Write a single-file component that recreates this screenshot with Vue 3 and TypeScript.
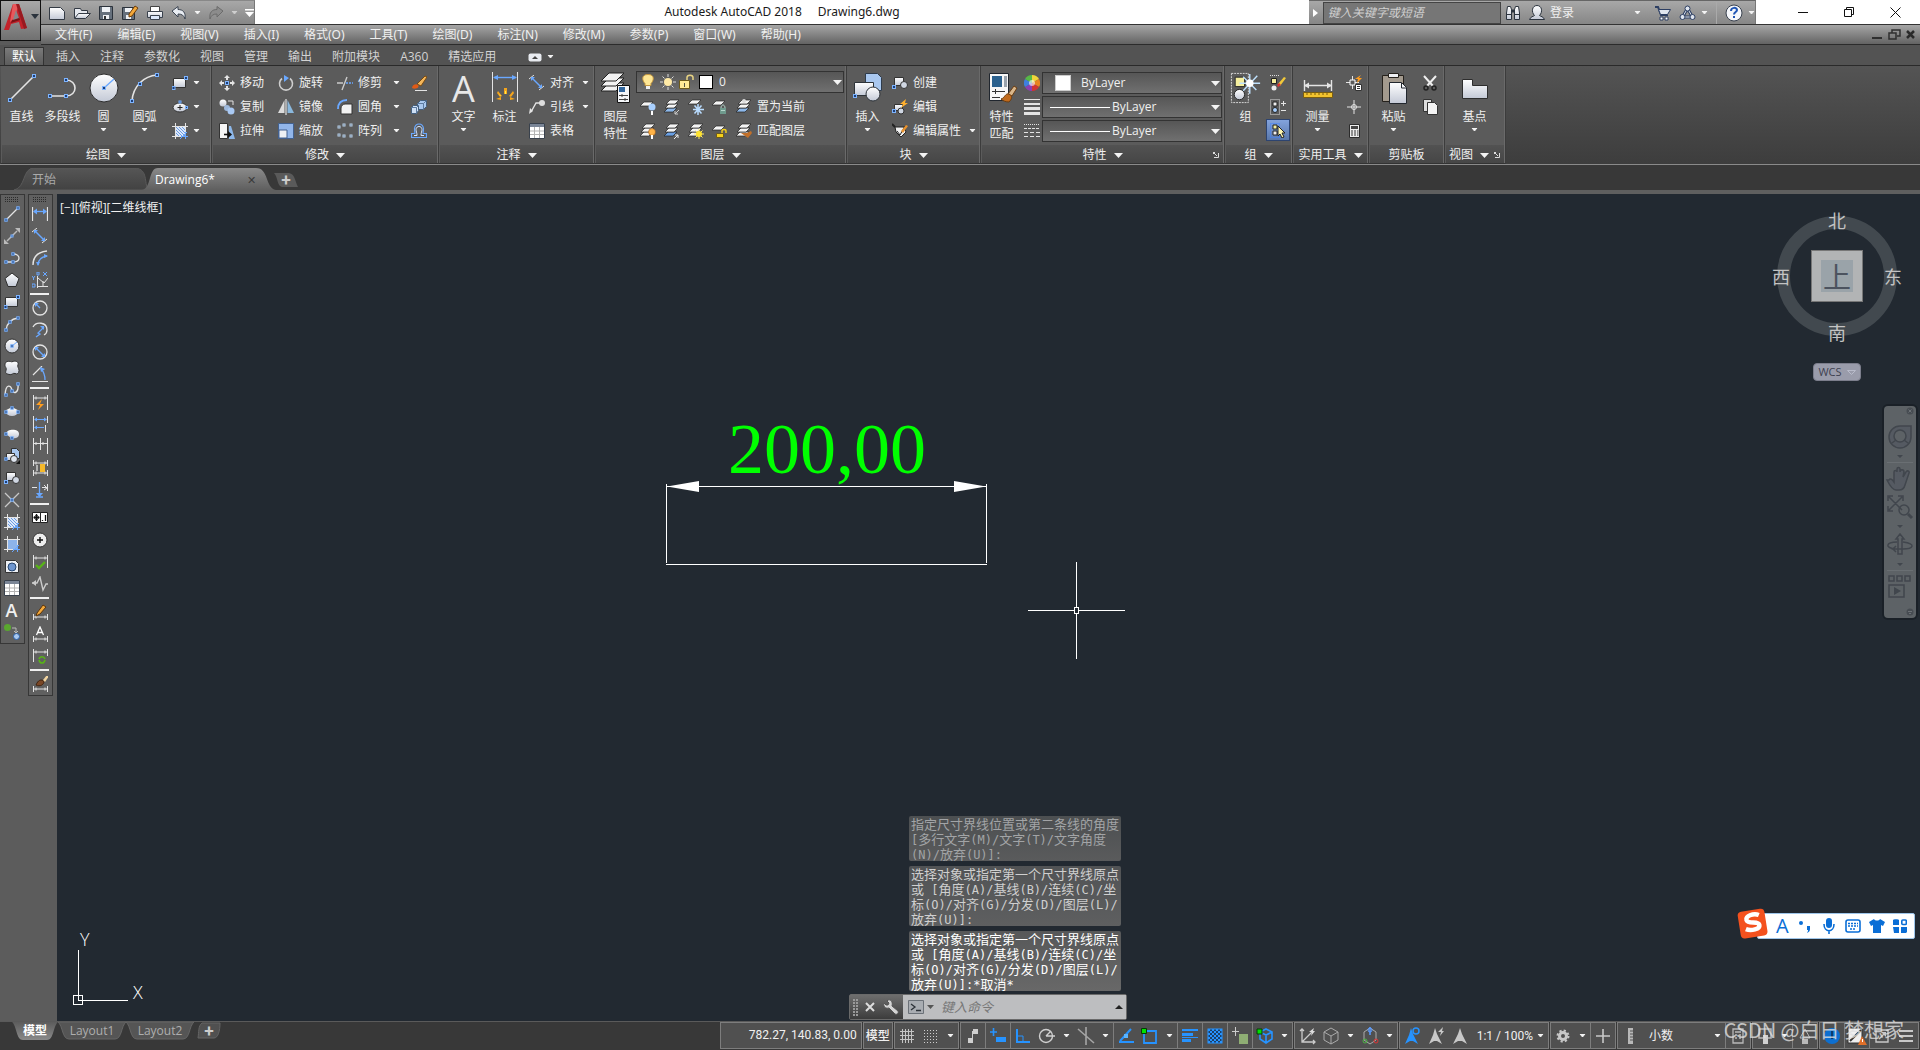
<script setup lang="ts">
import { h } from 'vue'

type Glyph = [number, number, string]
interface Big { n: string; t: string[]; caret?: boolean }
interface Small { n: string; t?: string; caret?: boolean; on?: boolean }
interface Panel { id: string; title: string; caret?: boolean; launch?: boolean; big: Big[]; cols: Small[][] }

const W = '#e4e4e4'
const B = '#6aa8ff'
const hd = (x: number, y: number, s = 3) =>
  `<rect x="${x - s / 2}" y="${y - s / 2}" width="${s}" height="${s}" fill="#1d3f78" stroke="#7db4ff"/>`
const line = (d: string, c = W, w = 1) => `<path d="${d}" stroke="${c}" stroke-width="${w}"/>`
const fill = (d: string, c: string, s = 'none') => `<path d="${d}" fill="${c}" stroke="${s}"/>`
const sheet = (x: number, y: number, c = '#f4f4f4') =>
  `<path d="M${x + 4} ${y}h9l-4 4h-9z" fill="${c}" stroke="#242424" stroke-width=".7"/>`
const stack = (c3 = '#f4f4f4') => sheet(0, 9, c3) + sheet(1, 5) + sheet(2, 1)
const hdim = (y: number) => line(`M1.500 ${y - 3}v6M15.500 ${y - 3}v6M2 ${y}h13M4 ${y - 1.5}v3M13 ${y - 1.5}v3`)
const hatch = (inner: string) =>
  `<rect x="4" y="4" width="9" height="9" fill="${inner}"/>` + line('M0 3.500h16M3.500 0v16M0 13.500h9M13.500 0v9') + line('M9 13.500h7M13.500 9v7M15 9l-7 7', B)

const glyphs: Record<string, Glyph> = {
  caret: [7, 4, fill('M1 0h5l-2.500 3z', '#f4f4f4', '#f4f4f4')],
  caretBig: [9, 5, fill('M0 0h9l-4.500 5z', '#f4f4f4')],
  caretDark: [7, 4, fill('M0 0h7l-3.500 4z', '#555')],
  caretUp: [8, 4, fill('M0 4h8l-4-4z', '#222')],
  caretRight: [5, 8, fill('M0 0v8l5-4z', '#fff')],
  launch: [6, 6, line('M0 .5h2M.5 0v2M1 1l3 3', '#ddd') + line('M5.500 1v4.500h-4.500', '#ddd')],
  appA: [24, 28, fill('M0 27L9 1h6l8 24-6 1-2-7-8 2-2 6z', '#c3222a') + fill('M9 1h6l-5 15-4 3z', '#e8585c') + fill('M8 17l7-3 1 3-9 3z', '#7d1216') + fill('M12 7l3 8-6 2z', '#85878a') + fill('M15 1l8 24-3 1L12 1z', '#981a20')],
  appCaret: [8, 5, fill('M0 0h8l-4 5z', '#2b333d')],
  new: [18, 16, fill('M1.500 2.500h11l4 4v8h-15z', 'url(#gl)', '#333a44')],
  open: [18, 16, fill('M1.500 13V3.500h6l1 2h6v3', '#e6e9ef', '#333a44') + fill('M1.500 13.500l4-5h12l-5 5z', 'url(#gl)', '#333a44')],
  save: [16, 16, fill('M1.500 1.500h13v13h-13z', '#66707c', '#2b323b') + fill('M4 2h8v5H4zM5 10h6v4H5z', '#eef1f5') + fill('M6 11h2v3H6z', '#333')],
  saveAs: [18, 16, fill('M1.500 2.500h12v12h-12z', '#66707c', '#2b323b') + fill('M4 3h7v4H4zM5 10h5v4H5z', '#eef1f5') + fill('M8 9l6-8 3 2-6 8-3 1z', '#f3a83a', '#6b3d0c')],
  print: [18, 16, fill('M4.500 1.500h9v5h-9z', '#fff', '#444') + fill('M1.500 6.500h15v6h-15z', 'url(#gl)', '#39414c') + fill('M4.500 10.500h9v4h-9z', '#dbe7fa', '#39414c')],
  undo: [16, 14, fill('M1 5l6-4.500v3c5 0 8 3 7 9.500-1-3.500-3-5-7-5v3z', '#e9edf3', '#3a4350')],
  redo: [16, 14, fill('M15 5L9 .5v3c-5 0-8 3-7 9.500 1-3.500 3-5 7-5v3z', '#8c8c8c', '#6b6b6b')],
  qatMore: [9, 8, fill('M0 0h9v1.500H0zM0 3h9L4.500 8z', '#fff')],
  binoc: [16, 16, fill('M2.500 1.500h3l1 3v10h-5V8zM13.500 1.500h-3l-1 3v10h5V8z', 'url(#gl)', '#2c343e') + line('M6 6h4', '#2c343e', 3) + line('M1.500 9.500h5M9.500 9.500h5', '#2c343e')],
  user: [16, 16, fill('M.5 14.500c1-3 4-3 5-4C2 7 3 .5 8 .5S14 7 10.500 10.500c1 1 4 1 5 4z', 'url(#gl)', '#2c343e')],
  cart: [17, 16, line('M1 2h3l3 8h7', '#2d3f63', 2) + fill('M4.500 4.500h12l-3 5h-7z', '#dfe5ef', '#2d3f63') + fill('M6 12h3v3H6zM11 12h3v3h-3z', '#fff', '#2d3f63')],
  a360: [17, 16, line('M8.500 3.500L3.500 12h10z', '#2d3f63', 3) + line('M8.500 3.500L3.500 12h10z', '#dfe5ef', 1) + '<g fill="#dfe5ef" stroke="#2d3f63"><circle cx="8.500" cy="3.500" r="2.500"/><circle cx="3.500" cy="12" r="2.500"/><circle cx="13.500" cy="12" r="2.500"/></g>'],
  help: [18, 18, '<circle cx="9" cy="9" r="8" fill="#f5f7fb" stroke="#3b4350"/><path d="M6 7c0-4 6-4 6-1 0 2-3 2-3 4.500M9 12v2" stroke="#1f55b5" stroke-width="2"/>'],
  wMin: [10, 10, line('M0 5.500h10', '#111')],
  wMax: [10, 10, line('M.5 2.500h7v7h-7zM2.500 2V.5h7v7H8', '#111')],
  wClose: [11, 11, line('M.5 .5l10 10M10.500 .5l-10 10', '#111')],
  mMin: [11, 10, line('M0 8h10', '#2f2f2f', 2)],
  mMax: [13, 11, line('M1 4h7v6H1zM4 4V1h8v6H9', '#2f2f2f', 1.5)],
  mClose: [9, 9, line('M1 1l7 7M8 1L1 8', '#2a2a2a', 2.5)],
  ribbonMin: [14, 9, '<rect x=".5" y=".5" width="13" height="8" rx="2" fill="#e8ebf0"/><path d="M4 6h6L7 3z" fill="#444"/>'],

  line: [32, 32, line('M4 28L28 4', W, 1.6) + hd(4, 28) + hd(28, 4)],
  pline: [32, 32, line('M3 24h16c12 0 12-16 0-16', W, 1.6) + hd(3, 24) + hd(19, 24) + hd(19, 8)],
  circle: [32, 32, '<circle cx="16" cy="16" r="14" fill="url(#gl)" stroke="#2d2d2d"/>' + line('M16 16L26 7', B, 1.4) + hd(16, 16)],
  arc: [32, 32, line('M3 29C4 14 15 4 28 3', W, 1.6) + hd(3, 29) + hd(11, 12) + hd(28, 3)],
  rect: [16, 16, fill('M1.500 3.500h12v9h-12z', 'url(#gl)', '#333') + hd(1.5, 13) + hd(14, 3)],
  ellipse: [16, 16, '<ellipse cx="8" cy="8.500" rx="7" ry="4.500" fill="url(#gl)" stroke="#333"/>' + line('M8 6v5M5.500 8.500h5', '#222') + hd(8, 3, 2) + hd(14.5, 8.5, 2)],
  hatch: [16, 16, hatch('url(#hatchFill)')],
  grad: [16, 16, hatch('#8db4ea')],
  move: [16, 16, line('M8 1v4M8 11v4M1 8h4M11 8h4', W, 2) + fill('M8 0l3 3H5zM8 16l3-3H5zM0 8l3-3v6zM16 8l-3-3v6z', W) + hd(8, 8)],
  rotate: [16, 16, line('M4 3.500a6.500 6.500 0 1 0 8 0', '#cfcfcf', 1.6) + fill('M6 0l5 3-5 4z', B)],
  trim: [16, 16, line('M0 8h6M10 2L5 15', '#ccc', 1.4) + line('M9 8h2M12 8h2M15 8h1', B, 1.4)],
  erase: [16, 16, line('M4 15.500h12', W) + fill('M6 9l8-8 2 1-6 9z', '#f3b65a', '#7a4a10') + fill('M1 13c0-3 4-5 6-3s-2 5-6 3z', '#e05a16')],
  copy: [16, 16, '<circle cx="4" cy="4" r="3.500" fill="url(#gl)"/><circle cx="8" cy="9" r="3" fill="#9db8dc"/><circle cx="12" cy="12" r="3.500" fill="#a9c9f3"/>' + line('M9 2h5v4', W)],
  mirror: [16, 16, fill('M6.500 1v13H0z', '#dcdcdc') + fill('M9.500 1v13H16z', '#8ab8dd') + line('M8 0v16', '#fff')],
  fillet: [16, 16, fill('M4 15V9c0-2 2-4 4-4h7v10z', '#f2f2f2', '#333') + line('M1 10C1 4 4 1 10 1', B, 1.8)],
  explode: [16, 16, fill('M6.500 4.500l3-3h6v6l-3 3h-6z', '#a9c9f0', '#44607f') + line('M6.500 4.500h6v6M12.500 4.500l3-3', '#5c7ba0') + fill('M.5 8.500l2-2h5v5l-2 3h-5z', '#cfe0f5', '#44607f') + line('M.5 8.500h5v6M5.500 8.500l2-2', '#5c7ba0')],
  stretch: [16, 16, fill('M.5 .5h8v15h-8z', '#f5f5f5', '#333') + fill('M10 3h2l4 13h-6z', '#8db8ea') + line('M5 11.500h6', '#111', 1.6) + fill('M9 8l4 3.500-4 3.500z', '#111')],
  scale: [16, 16, fill('M.5 .5h15v15h-15z', '#92b6ea', '#42618f') + fill('M1 7h8v8H1z', '#eef1f5', '#42618f')],
  array: [16, 16, [[2, 4], [2, 12], [7, 2], [7, 13], [14, 2], [14, 13]].map(([x, y]) => `<rect x="${x - 1}" y="${y - 1}" width="2" height="2" fill="#345" stroke="#bcd3ec"/>`).join('')],
  offset: [16, 16, line('M.5 14.500h15v-4h-3c-1 0 0-2 0-5-1-6-8-6-9 0 0 3 1 5 0 5h-3z', B, 1.2) + line('M3 12.500h3c0-3-1-4-1-6 0-4 6-4 6 0 0 2-1 3-1 6h3', '#d5e5ff')],
  dimBig: [32, 32, line('M3.500 0v30M28.500 0v30') + line('M5 5.500h22', B, 1.4) + fill('M4 5.500l5-2.500v5zM28 5.500l-5-2.500v5z', B) + fill('M15 16h3v6h-3zM9 19l4 5-2 1-3-4zM24 19l-4 5 2 1 3-4zM7 27l5-2v3zM26 27l-5-2v3z', '#f5a51c') + fill('M16 19h1v3h-1zM10 22l2 2h-1z', '#fff04a')],
  aligned: [16, 16, line('M0 4l5-4M10 15l5-4') + line('M3 3l9 9', B, 1.4) + fill('M2 2h4l-4 4zM13 13H9l4-4z', B)],
  leader: [16, 16, '<circle cx="13" cy="4" r="3" fill="#ddd"/>' + line('M11 4H7l-5 9', W, 1.4) + fill('M0 15l1-6 3 3z', W)],
  table: [16, 16, fill('M.5 .5h15v15h-15z', '#fff', '#39414c') + fill('M1 1h14v3H1z', '#7a8596') + line('M1 8h14M1 11.500h14M5.500 4v11M10.500 4v11', '#b3b3b3')],
  layerProps: [32, 32, [14, 9, 4].map((y) => `<path d="M9 ${y - 3}h15l-8 8H1z" fill="#f2f2f2" stroke="#222"/>`).join('') + fill('M17.500 13.500h12v17h-12z', '#f5f7fa', '#111') + fill('M19 15h6v5h-6z', '#31679f') + line('M19 23.500h9M19 27.500h9M22 22v3M25 26v3', '#444')],
  bulb: [12, 16, fill('M6 .5c7 0 6 6 3 9v2H3v-2C0 6.500-1 .5 6 .5z', '#ffe795', '#c2953e') + fill('M4 12h4v3H4z', '#eee')],
  sun: [16, 16, line('M8 0v3M8 13v3M0 8h3M13 8h3M2.500 2.500l2 2M11.500 11.500l2 2M13.500 2.500l-2 2M2.500 13.500l2-2', '#ddd') + '<circle cx="8" cy="8" r="4" fill="#ffeaa6"/>'],
  lockOpen: [16, 16, line('M8 7V3.500c0-3 6-3 6 0V6', '#e8d383', 1.5) + fill('M.5 6.500h10v8H.5z', '#ffeb96', '#6c5a1b') + line('M5.500 9v4', '#554')],
  l1: [16, 16, sheet(0, 3) + '<circle cx="12" cy="8" r="3.500" fill="#a9d0ff"/>' + line('M12 12v4', '#fff', 2)],
  l2: [16, 16, stack('#8db8ea') + line('M15 11l-4 4m0-3v3h3', '#ccc')],
  l3: [16, 16, sheet(0, 1) + line('M10 5v11M5 10.500h11M6.500 6.500l7 8M13.500 6.500l-7 8', '#b9dcff', 1.5)],
  l4: [16, 16, sheet(0, 2) + fill('M8 9h6v6H8z', '#6f9a8d') + line('M9 9c0-4 4-4 4 0M9 11.500h4', '#b5d6cb')],
  l5: [16, 16, stack('#8db8ea') + '<circle cx="8" cy="2" r="2" fill="#ddd"/>'],
  m1: [16, 16, stack() + '<circle cx="12" cy="9" r="3.500" fill="#ffb347" stroke="#8a4a10" stroke-width=".5"/>' + line('M12 12v4', '#fff', 2)],
  m2: [16, 16, stack('#6aa0e4') + line('M10 16l4-4m-3 0h3v3', '#eee')],
  m3: [16, 16, stack() + line('M11 6v10M6 11h10M7.500 7.500l7 7M14.500 7.500l-7 7', '#ffe96b') + '<circle cx="11" cy="11" r="3" fill="#ffe32e"/>'],
  m4: [16, 16, sheet(0, 3) + fill('M4.500 10.500h7v4h-7z', '#f5cf1b', '#6c5a1b') + line('M10 10V8c0-2 4-2 4 0v2', '#f5cf1b', 1.4)],
  m5: [16, 16, stack() + fill('M5 10l6 0 4-2 1 2-4 5z', '#c2702a')],
  insert: [32, 32, fill('M13.500 1.500h12l4 4v13h-16z', '#a9c8f0', '#2f3c4c') + fill('M2.500 10.500h19v13h-19z', 'url(#gl)', '#2d3339') + '<circle cx="21" cy="22" r="7" fill="url(#gl)" stroke="#2d3339"/>' + hd(3, 24)],
  bCreate: [16, 16, fill('M2.500 2.500h9v8h-9z', 'url(#gl)', '#333') + '<circle cx="12" cy="10" r="3.500" fill="#cfd6e2" stroke="#333"/>' + hd(2, 12)],
  bEdit: [16, 16, fill('M2.500 5.500h8v6h-8z', 'url(#gl)', '#333') + '<circle cx="9" cy="12" r="3" fill="#cfd6e2" stroke="#333"/>' + fill('M14 0L8 5h3l-2 4 7-5h-3z', '#ffb02e') + hd(2, 12)],
  bAttr: [16, 16, line('M0 1l3 3', '#222', 2) + fill('M3 4h9l2 5-5 5-5-5z', '#f0f0f0', '#222') + line('M5 8l3 4 5-9', '#222') + fill('M9 8l5-6 2 1-5 7z', '#e8922e')],
  match: [32, 32, fill('M3.500 1.500h19v27h-19z', '#f7f7f7', '#20262e') + fill('M6 4h10v11H6z', '#2b618e') + fill('M18 4h3v11h-3z', '#9aa3ad') + line('M6 19.500h13M6 25.500h8M9.500 17v5', '#333') + fill('M22 22l6-8 3 2-5 8z', '#d9b78b', '#6a3d12') + fill('M15 27c4-1 4-6 8-5 4 2 3 5 0 8-3 0-6-1-8-3z', '#c06a1c', '#6a3d12')],
  wheel: [16, 16, '<path d="M8 8V0a8 8 0 0 1 7 4z" fill="#f0d43a"/><path d="M8 8l7-4a8 8 0 0 1 0 8z" fill="#e88420"/><path d="M8 8l7 4a8 8 0 0 1-7 4z" fill="#d23333"/><path d="M8 8v8a8 8 0 0 1-7-4z" fill="#8a3fb5"/><path d="M8 8l-7 4a8 8 0 0 1 0-8z" fill="#3f7fe0"/><path d="M8 8L1 4a8 8 0 0 1 7-4z" fill="#57b847"/><circle cx="8" cy="8" r="3" fill="#fff" opacity=".6"/>'],
  lweight: [16, 16, line('M0 .5h16', W) + line('M0 5h16', W, 2) + line('M0 9.500h16', W, 3) + line('M0 14.500h16', W, 3)],
  ltype: [16, 16, `<path d="M0 1.500h16" stroke="${W}" stroke-dasharray="1 1"/><path d="M0 5.500h16" stroke="${W}" stroke-dasharray="3 1"/><path d="M0 9.500h16M0 13.500h16" stroke="${W}" stroke-dasharray="4 2"/>`],
  group: [34, 34, '<rect x="1.500" y="1.500" width="18" height="31" stroke="#ddd" stroke-dasharray="2 1"/>' + fill('M5.500 5.500h10v10h-10z', '#f5ef9e', '#222') + '<circle cx="10" cy="24" r="5.500" fill="url(#gl)" stroke="#222"/>' + line('M21 2v21M10 12h22M14 5l14 14M29 4L14 20', '#bfe2ff', 1.5) + '<circle cx="21" cy="12" r="4" fill="#fff"/>'],
  g1: [16, 16, fill('M1.500 3.500h5v5h-5z', '#f5ef9e', '#222') + '<circle cx="4" cy="13" r="2.500" fill="#eee"/><path d="M0 .5h9" stroke="#ddd" stroke-dasharray="1 1"/>' + fill('M8 9l6-7 2 1-6 8z', '#f0c83a') + fill('M7 10l2-2 2 2-3 2z', '#d33')],
  g2: [16, 16, '<rect x=".5" y=".5" width="9" height="15" stroke="#ddd" stroke-dasharray="1 1"/>' + fill('M3 3h4v4H3z', '#eee', '#222') + '<circle cx="5" cy="11" r="2.500" fill="#a9d0ff" stroke="#222"/>' + line('M11 4.500h5M13.500 2v5M11 11.500h5')],
  g3: [16, 16, '<rect x=".5" y="1.500" width="9" height="14" stroke="#3f82ff" stroke-dasharray="1 1"/>' + fill('M3 3h4v4H3z', '#f5ef9e', '#222') + fill('M3 9h4v4H3z', '#eee', '#222') + fill('M8 4l7 7h-3l2 4-2 1-2-4-2 2z', '#fff7b0', '#222')],
  measure: [32, 32, line('M2.500 8v11M29.500 8v11M3 13.500h26', W, 1.4) + fill('M2 13.500l5-3v6zM30 13.500l-5-3v6z', W) + fill('M1.500 20.500h29v5h-29z', '#f2c32e', '#7a5d10') + line('M5 21v2M9 21v2M13 21v2M17 21v2M21 21v2M25 21v2', '#7a5d10')],
  u1: [16, 16, line('M0 7.500h13M6.500 1v13', W) + fill('M4 5h5v5H4z', '#5b5b5b', '#fff') + fill('M15 0l-6 4h3l-1 4 5-5h-3z', '#ff9d1e') + fill('M9.500 9.500h6v6h-6z', '#fff', '#333') + line('M11 11.500h3M11 13.500h3', '#333')],
  u2: [16, 16, line('M8 1v14M1 8h14') + '<circle cx="8" cy="8" r="2.500" stroke="#e4e4e4"/>'],
  calc: [16, 16, fill('M3.500 1.500h10v13h-10z', '#ececec', '#2b2b2b') + fill('M5 3h7v3H5z', '#444') + [8, 10, 12].map((y) => line(`M5 ${y}h2M8 ${y}h2M11 ${y}h1.500`, '#333')).join('')],
  paste: [32, 32, fill('M4.500 3.500h21v26h-21z', '#a39a8e', '#25211c') + fill('M10.500 1.500h10v4h-10z', '#eef0f3', '#25211c') + fill('M11.500 10.500h12l5 5v16h-17z', 'url(#gl)', '#22272e') + line('M23.500 11v5h5', '#22272e')],
  cut: [16, 16, line('M2 1l9 10M14 1L5 11', '#f0f0f0', 2) + '<circle cx="4" cy="13" r="2" stroke="#222" stroke-width="1.500"/><circle cx="12" cy="13" r="2" stroke="#222" stroke-width="1.500"/>'],
  pages: [16, 16, fill('M1.500 .5h8v12h-8z', '#ddd', '#333') + fill('M5.500 3.500h7l3 3v9h-10z', '#f4f4f4', '#333')],
  base: [32, 32, fill('M3.500 7.500h10v6h15v13h-25z', 'url(#gl)', '#2d2d2d')],

  tXline: [16, 16, line('M3 13L13 3', '#bbb', 1.4) + fill('M16 0v5l-5-5zM0 16v-5l5 5z', '#bbb') + hd(8, 8, 2)],
  tPoly: [16, 16, fill('M8 1l7 5.500-3 8H4L1 6.500z', 'url(#gl)', '#2d2d2d')],
  tLine: [16, 16, line('M2 14L14 2', W, 1.3) + hd(2, 14, 2.4) + hd(14, 2, 2.4)],
  tPline: [16, 16, line('M1 12h8c8 0 8-8 0-8', W, 1.3) + hd(2, 12, 2.4) + hd(9, 12, 2.4) + hd(9, 4, 2.4)],
  tArc: [16, 16, line('M2 14C3 7 7 3 14 2', W, 1.3) + hd(2, 14, 2.4) + hd(6, 6, 2.4) + hd(14, 2, 2.4)],
  tCircle: [16, 16, '<circle cx="8" cy="8" r="7" fill="url(#gl)" stroke="#333"/>' + line('M8 8l5-4', B) + hd(8, 8, 2.4)],
  tCloud: [16, 16, fill('M3 1.500c3-1 4 1 6 0s6 0 5 3 1 3 1 6-2 4-4 3-3 2-6 1-4-1-3-4-1-3-1-5 0-3 2-4z', 'url(#gl)', '#333')],
  tSpline: [16, 16, line('M1 13C2 0 7 4 8 8s7 4 6-6', W, 1.4) + hd(2, 13, 2.4) + hd(8, 9, 2.4) + hd(14, 2, 2.4)],
  tEll: [16, 16, '<ellipse cx="8" cy="8" rx="6" ry="4" fill="url(#gl)"/>' + hd(2, 8, 2.4) + hd(14, 8, 2.4) + hd(8, 4, 2.4)],
  tEllArc: [16, 16, '<path d="M2 8c0-5 13-6 13 0 0 4-4 5-8 4z" fill="url(#gl)"/>' + hd(2, 8, 2.4) + hd(8, 12, 2.4)],
  tInsert: [16, 16, fill('M7.500 .5h5l3 3v7h-8z', '#a9c8f0', '#333') + fill('M2.500 5.500h8v7h-8z', 'url(#gl)', '#333') + '<circle cx="10" cy="11" r="3.500" fill="#dfe5ef" stroke="#333"/>' + fill('M16 12v4h-4z', '#111') + hd(2, 11, 2.4)],
  tPoint: [16, 16, line('M1 1l14 14M15 1L1 15', '#c8c8c8', 1.3) + hd(8, 8, 2.4)],
  tRegion: [16, 16, fill('M1.500 2.500h10l3 3v9h-13z', '#edf0f4', '#333') + '<circle cx="8" cy="9" r="4" fill="#6e96d0" stroke="#26466f"/>'],
  tAdd: [16, 16, '<circle cx="3.500" cy="3.500" r="3.500" fill="#5aa82f"/><circle cx="12.500" cy="12.500" r="3" fill="#a9c8f0" stroke="#2a5ea8"/>' + line('M8 4h4v4M10 7l2 2 2-2', '#bbb')],
  dLin: [16, 16, line('M.5 1v14M15.500 1v14', W, 1.2) + line('M2 5.500h12', B, 1.3) + fill('M1 5.500l4-3v6zM15 5.500l-4-3v6z', B)],
  dArc: [16, 16, line('M1 15C1 7 6 2 15 1', W, 1.4) + line('M6 15c0-5 3-8 9-9', B, 1.4) + fill('M16 6l-4-2v4zM6 16l-2-4h4z', B)],
  dOrd: [16, 16, line('M5.500 4v12M5 14.500h11M6 6l6 5 4-5M11 14v-5', W) + line('M0 4l1.500 2L3 4M1.500 6v2M11 0l4 4M15 0l-4 4M0 12h3v3H0zM5 0h2v3H5z', B)],
  dRad: [16, 16, '<circle cx="8" cy="8" r="7" stroke="#e4e4e4" stroke-width="1.300"/>' + line('M3 3l5 5', B, 1.3) + fill('M3 3h4L3 7z', B)],
  dJog: [16, 16, line('M1 5c3-6 14-5 14 3 0 3-1 4-3 5', W, 1.3) + line('M4 15l4-3-2-1 6-6', B, 1.3) + fill('M12 4v4L8 4z', B)],
  dDia: [16, 16, '<circle cx="8" cy="8" r="7" stroke="#e4e4e4" stroke-width="1.300"/>' + line('M4 4l8 8', B, 1.3) + fill('M3 3h4L3 7zM13 13H9l4-4z', B)],
  dAng: [16, 16, line('M0 15.500h16M1 9l9-9', W, 1.2) + line('M9 3c3 3 4 6 4 11', B, 1.3) + fill('M8 1l5 2-4 3z', B)],
  dQuick: [16, 16, hdim(4) + line('M1.500 4v12M15.500 4v12') + fill('M10 5l-6 6h4l-2 5 6-6H8z', '#ff9d1e')],
  dBase: [16, 16, line('M1.500 0v16M15.500 0v7M13.500 9v7') + line('M3 3.500h11M3 11.500h9', B, 1.2) + fill('M2 3.500l3-2v4zM2 11.500l3-2v4zM15 3.500l-3-2v4z', B)],
  dCont: [16, 16, line('M1.500 0v16M8.500 0v12M15.500 0v16M2 5.500h13M4 4v3M11 4v3')],
  dSpace: [16, 16, hdim(3) + hdim(13) + fill('M8 4h5v8H8z', '#f5b92b') + line('M5 5v6', '#fff')],
  dBreak: [16, 16, line('M0 5.500h5M10 5.500h5M12 3l3 3-3 2M15.500 2v7') + line('M7.500 0v14M4 15h7', B, 1.3) + fill('M4 11h7l-3.500 4z', B)],
  dTol: [16, 16, fill('M.5 2.500h8v10h-8zM8.500 2.500h7v10h-7z', '#fff', '#222') + line('M4.500 4v7M1.500 7.500h6M13.500 5v6M10.500 10v1', '#111', 1.3) + '<circle cx="4.500" cy="7.500" r="2" stroke="#111"/>'],
  dCen: [16, 16, '<circle cx="8" cy="8" r="7" fill="#eee" stroke="#333"/>' + line('M8 5v6M5 8h6', '#111', 1.4)],
  dInsp: [16, 16, hdim(4) + line('M1.500 4v10M15.500 4v10') + line('M4 11l3 3 6-6', '#58b318', 2.4)],
  dJogL: [16, 16, line('M0 7h5l3-6 3 13 3-6h2', '#ccc', 1.4) + fill('M0 7l4-3v6z', '#ccc')],
  dEdit: [16, 16, hdim(13) + fill('M5 9l6-8 3 2-6 7-4 2z', '#f3a83a', '#5c340a')],
  dText: [16, 16, hdim(13) + line('M4.500 9L8 1l3.500 8M6 6.500h4', '#fff', 1.3)],
  dUpd: [16, 16, hdim(4) + line('M1.500 4v10M15.500 4v4') + line('M7 11c1-3 5-3 6 0M13 12c-1 4-5 4-6 0', '#58b318', 1.6)],
  dStyle: [16, 16, hdim(13) + fill('M4 9c2-5 5-6 8-4 0 4-4 6-8 4z', '#7a4726', '#40220d') + fill('M11 4l4-5 2 1-4 6z', '#f0d4a0')],

  sGrid: [18, 18, line('M4.500 2v14M7.500 2v14M10.500 2v14M13.500 2v14M2 4.500h14M2 8.500h14M2 12.500h14', '#c4c4c4')],
  sSnap: [18, 18, [3, 6, 9, 12, 15].map((y) => `<path d="M2 ${y + .5}h14" stroke="#cfcfcf" stroke-dasharray="1 2"/>`).join('')],
  sInfer: [18, 18, fill('M4 11h5v5H4zM9 2h5v5H9z', '#cfcfcf') + line('M8.500 4v8', '#cfcfcf')],
  sDyn: [18, 18, line('M4.500 1v8M1 5h7', '#2693ff', 1.6) + fill('M7 10h10v5H7z', '#2693ff')],
  sOrtho: [18, 18, line('M3 2v13h13', '#2693ff', 2) + line('M4 9h5v5', '#2693ff')],
  sPolar: [18, 18, '<circle cx="8" cy="9" r="6.500" stroke="#cfcfcf" stroke-width="1.400"/>' + line('M8 9h9M8 9l5-5', '#cfcfcf', 1.4)],
  sIso: [18, 18, line('M1 2l16 14M9 0v18', '#a5a5a5', 1.6)],
  sTrack: [18, 18, line('M2 15h15M3 14L14 2', '#2693ff', 2) + fill('M7 7h4v4H7z', '#5ab4ff')],
  sOsnap: [18, 18, line('M3 4h12v12H3z', '#2693ff', 1.8) + fill('M.5 1.500h5v5h-5z', '#00e000', '#043a04')],
  sLw: [18, 18, fill('M1 2h16v2H1zM1 6h11v3H1zM1 10h16v1H1zM1 12h9v3H1z', '#2693ff')],
  sTrans: [18, 18, '<rect x="2" y="2" width="14" height="14" fill="url(#chk)" stroke="#2693ff"/>'],
  sCycle: [18, 18, line('M4.500 0v9M1 4.500h7', '#ccc') + fill('M8 7h9v10H8z', '#8fae74')],
  s3d: [18, 18, line('M10 2l6 3v7l-6 4-6-4V5zM4 5l6 3 6-3M10 8v8', '#2693ff', 1.6) + fill('M1 2h5v5H1z', '#00e000', '#043a04')],
  sUcs: [18, 18, line('M4 2v13h13M2 4l2-2 2 2M4 15L14 5M15 13l2 2-2 2', '#ccc', 1.3) + fill('M16 1l-5 4h3l-1 4 4-5h-2z', '#ddd')],
  sCube: [18, 18, line('M9 1l7 4v8l-7 4-7-4V5zM2 5l7 4 7-4M9 9v8', '#aaa')],
  sGizmo: [18, 18, line('M9 1l6 4v8l-6 4-6-4V5z', '#aaa') + line('M9 0v8', '#5a9bff', 1.5) + '<circle cx="4" cy="14" r="2" stroke="#4bb543"/><circle cx="15" cy="14" r="2" stroke="#d33"/><circle cx="9" cy="3" r="2" stroke="#5a9bff"/>'],
  sAnn1: [18, 18, fill('M8 1l2 6 5 10-5-3H7l-5 3 4-9z', '#2693ff') + '<circle cx="13" cy="4" r="3" stroke="#2693ff" stroke-width="1.500"/>'],
  sAnn2: [18, 18, fill('M8 1l2 6 5 10-5-3H7l-5 3 4-9zM16 0l-5 5h3l-1 4 4-5h-2z', '#c8c8c8')],
  sAnn3: [18, 18, fill('M9 1l2 6 5 10-5-3H7l-5 3 5-10z', '#c8c8c8')],
  sGear: [18, 18, '<circle cx="9" cy="9" r="3.500" stroke="#c8c8c8" stroke-width="3"/><circle cx="9" cy="9" r="5.500" stroke="#c8c8c8" stroke-width="2" stroke-dasharray="2.200 2.120"/>'],
  sPlus: [18, 18, line('M9 2v14M2 9h14', '#c8c8c8', 1.6)],
  sRuler: [18, 18, fill('M7 1h5v16H7z', '#b8b8b8') + line('M9 4h3M9 7h3M9 10h3M9 13h3', '#555')],
  sProps: [18, 18, line('M4 2h10v14H4zM6 5h6M6 8h2M10 8h2M6 11h2M10 11h2', '#b8b8b8', 1.3)],
  sLock: [18, 18, line('M3 2h12v9H3z', '#b8b8b8', 1.5) + fill('M7 8h5v9H7z', '#d0d0d0')],
  sIsol: [18, 18, line('M9 2l5 9H4z', '#b8b8b8') + fill('M6 12h6v5H6z', '#b8b8b8')],
  sHw: [18, 18, '<circle cx="9" cy="9" r="8" fill="#0d6fd0"/>' + line('M9 4v8', '#0a3b70', 2)],
  sImg: [20, 18, fill('M1 1h14v15H1z', '#f0f0f0', '#333') + line('M3 14L14 3', '#333', 2) + fill('M15 9l5 9H11z', '#e0702a') + line('M15.500 12v3', '#fff')],
  sFull: [18, 18, line('M3 3h12v12H3zM6 12l6-6', '#c8c8c8', 1.4) + fill('M13 5v5l-5-5z', '#c8c8c8')],
  sMenu: [18, 18, line('M2 4h14M2 9h14M2 14h14', '#c8c8c8', 2)],
  cmdX: [10, 10, line('M1 1l8 8M9 1L1 9', '#ddd', 2)],
  wrench: [16, 16, fill('M5 1l-1 1 2 2-1 2-2 0-2-2c-1 3 1 6 5 5l6 6c2 1 4-1 3-3l-6-5C10 3 8 0 5 1z', '#d4d4d4', '#555')],
  grip: [6, 18, [1, 4, 7, 10, 13, 16].map((y) => fill(`M0 ${y}h2v2H0zM3 ${y}h2v2H3z`, '#9a9a9a')).join('')],
  gripH: [14, 5, [0, 2, 4].map((y) => `<path d="M0 ${y + .5}h14" stroke="#2c2c2c" stroke-dasharray="1 1"/>`).join('')],
  prompt: [16, 14, fill('M.5 .5h15v13H.5z', '#a9adb2', '#6b7178') + line('M3 4l4 3-4 3M8 10.500h5', '#2c3238', 1.3)],
  sogou: [34, 32, '<g transform="rotate(-9 17 16)"><rect x="3" y="3" width="27" height="27" rx="4" fill="#f4511e"/><path d="M24 9c-5-3-14-1-13 3 1 5 12 2 12 7 0 4-9 5-14 2" stroke="#fff" stroke-width="4.500"/></g>'],
  imePunc: [16, 16, '<circle cx="4" cy="5" r="2" fill="#0a6ed6"/>' + fill('M10 8h3v3c0 2-1 3-3 4 1-2 1-2 1-3h-1z', '#0a6ed6')],
  imeMic: [16, 18, '<rect x="5" y="1" width="6" height="10" rx="3" fill="#0a6ed6"/>' + line('M3 7c0 9 10 9 10 0M8 14v3', '#0a6ed6', 1.6)],
  imeKey: [16, 14, '<rect x="1" y="1" width="14" height="12" rx="2" stroke="#0a6ed6" stroke-width="1.600"/><path d="M3 4.500h10M3 7h10M5 10h6" stroke="#0a6ed6" stroke-width="1.300" stroke-dasharray="2 1"/>'],
  imeShirt: [16, 14, fill('M5 0c1 2 5 2 6 0l5 3-2 4-2-1v8H4V6L2 7 0 3z', '#0a6ed6')],
  imeGrid: [14, 14, fill('M0 1c0-1 6-1 6 0v5H0zM0 8h6v6H1zM8 8h6v5l-1 1H8z', '#0a6ed6') + '<rect x="8.800" y="1" width="4.500" height="4.500" rx="1" stroke="#0a6ed6" stroke-width="1.600"/>'],
}

const Icon = (p: { n: string }) => {
  const [w, ht, body] = glyphs[p.n]
  return h('svg', { width: w, height: ht, viewBox: `0 0 ${w} ${ht}`, fill: 'none', 'aria-hidden': 'true', innerHTML: body })
}

const qat = ['new', 'open', 'save', 'saveAs', 'print', 'undo']
const menus = ['文件(F)', '编辑(E)', '视图(V)', '插入(I)', '格式(O)', '工具(T)', '绘图(D)', '标注(N)', '修改(M)', '参数(P)', '窗口(W)', '帮助(H)']
const tabs = ['默认', '插入', '注释', '参数化', '视图', '管理', '输出', '附加模块', 'A360', '精选应用']

const panels: Panel[] = [
  { id: 'draw', title: '绘图', caret: true,
    big: [{ n: 'line', t: ['直线'] }, { n: 'pline', t: ['多段线'] }, { n: 'circle', t: ['圆'], caret: true }, { n: 'arc', t: ['圆弧'], caret: true }],
    cols: [[{ n: 'rect', caret: true }, { n: 'ellipse', caret: true }, { n: 'hatch', caret: true }]] },
  { id: 'modify', title: '修改', caret: true, big: [],
    cols: [
      [{ n: 'move', t: '移动' }, { n: 'copy', t: '复制' }, { n: 'stretch', t: '拉伸' }],
      [{ n: 'rotate', t: '旋转' }, { n: 'mirror', t: '镜像' }, { n: 'scale', t: '缩放' }],
      [{ n: 'trim', t: '修剪', caret: true }, { n: 'fillet', t: '圆角', caret: true }, { n: 'array', t: '阵列', caret: true }],
      [{ n: 'erase' }, { n: 'explode' }, { n: 'offset' }],
    ] },
  { id: 'annotate', title: '注释', caret: true,
    big: [{ n: 'text', t: ['文字'], caret: true }, { n: 'dimBig', t: ['标注'] }],
    cols: [[{ n: 'aligned', t: '对齐', caret: true }, { n: 'leader', t: '引线', caret: true }, { n: 'table', t: '表格' }]] },
  { id: 'layers', title: '图层', caret: true, big: [{ n: 'layerProps', t: ['图层', '特性'] }], cols: [] },
  { id: 'block', title: '块', caret: true, big: [{ n: 'insert', t: ['插入'], caret: true }],
    cols: [[{ n: 'bCreate', t: '创建' }, { n: 'bEdit', t: '编辑' }, { n: 'bAttr', t: '编辑属性', caret: true }]] },
  { id: 'props', title: '特性', caret: true, launch: true, big: [{ n: 'match', t: ['特性', '匹配'] }], cols: [] },
  { id: 'group', title: '组', caret: true, big: [{ n: 'group', t: ['组'] }], cols: [[{ n: 'g1' }, { n: 'g2' }, { n: 'g3', on: true }]] },
  { id: 'util', title: '实用工具', caret: true, big: [{ n: 'measure', t: ['测量'], caret: true }], cols: [[{ n: 'u1' }, { n: 'u2' }, { n: 'calc' }]] },
  { id: 'clip', title: '剪贴板', big: [{ n: 'paste', t: ['粘贴'], caret: true }], cols: [[{ n: 'cut' }, { n: 'pages' }]] },
  { id: 'view', title: '视图', caret: true, launch: true, big: [{ n: 'base', t: ['基点'], caret: true }], cols: [] },
]
const layerRows: Small[][] = [
  [{ n: 'l1' }, { n: 'l2' }, { n: 'l3' }, { n: 'l4' }, { n: 'l5', t: '置为当前' }],
  [{ n: 'm1' }, { n: 'm2' }, { n: 'm3' }, { n: 'm4' }, { n: 'm5', t: '匹配图层' }],
]
const propRows = [
  { icon: 'wheel', label: '对象颜色', kind: 'swatch' },
  { icon: 'lweight', label: '线宽', kind: 'rule' },
  { icon: 'ltype', label: '线型', kind: 'rule' },
]

const drawTools = ['tLine', 'tXline', 'tPline', 'tPoly', 'rect', 'tArc', 'tCircle', 'tCloud', 'tSpline', 'tEll', 'tEllArc', 'tInsert', 'bCreate', 'tPoint', 'hatch', 'grad', 'tRegion', 'table', 'text', 'tAdd']
const dimTools = ['dLin', 'aligned', 'dArc', 'dOrd', '|', 'dRad', 'dJog', 'dDia', 'dAng', '|', 'dQuick', 'dBase', 'dCont', 'dSpace', 'dBreak', '|', 'dTol', 'dCen', 'dInsp', 'dJogL', '|', 'dEdit', 'dText', 'dUpd', '|', 'dStyle']

const history = [
  ['指定尺寸界线位置或第二条线的角度', '[多行文字(M)/文字(T)/文字角度', '(N)/放弃(U)]:'],
  ['选择对象或指定第一个尺寸界线原点', '或 [角度(A)/基线(B)/连续(C)/坐', '标(O)/对齐(G)/分发(D)/图层(L)/', '放弃(U)]:'],
  ['选择对象或指定第一个尺寸界线原点', '或 [角度(A)/基线(B)/连续(C)/坐', '标(O)/对齐(G)/分发(D)/图层(L)/', '放弃(U)]:*取消*'],
].map((b) => b.map((l) => l.split(/([\x20-\x7e]+)/).filter((s) => s)))
const isLatin = (s: string) => /^[\x20-\x7e]/.test(s)

// Each group holds cells; 'v' is a drop-down arrow, a leading quote marks a caption
const status: string[][][] = [
  [['sGrid', 'sSnap', 'v']],
  [['sInfer'], ['sDyn'], ['sOrtho', 'sPolar', 'v', 'sIso', 'v'], ['sTrack', 'sOsnap', 'v'], ['sLw'], ['sTrans'], ['sCycle'], ['s3d', 'v']],
  [['sUcs', 'sCube', 'v', 'sGizmo', 'v']],
  [['sAnn1', 'sAnn2', 'sAnn3', '"1:1 / 100%', 'v']],
  [['sGear', 'v'], ['sPlus']],
  [['sRuler', '"小数', 'v'], ['sProps']],
  [['sLock', 'v'], ['sIsol']],
  [['sHw'], ['sImg'], ['sFull', 'sMenu']],
]
</script>

<template>
  <div class="app">
    <svg class="defs" width="0" height="0" aria-hidden="true">
      <defs>
        <linearGradient id="gl" x1="0" y1="0" x2="0" y2="1"><stop offset="0" stop-color="#ffffff" /><stop offset="1" stop-color="#c3c9d6" /></linearGradient>
        <linearGradient id="gt" x1="0" y1="0" x2="0" y2="1"><stop offset="0" stop-color="#8a8a8a" /><stop offset="1" stop-color="#5f5f5f" /></linearGradient>
        <linearGradient id="gd" x1="0" y1="0" x2="0" y2="1"><stop offset="0" stop-color="#565656" /><stop offset="1" stop-color="#424242" /></linearGradient>
        <linearGradient id="gb" x1="0" y1="0" x2="0" y2="1"><stop offset="0" stop-color="#5c5c5c" /><stop offset="1" stop-color="#8a8a8a" /></linearGradient>
        <pattern id="hatchFill" width="3" height="3" patternUnits="userSpaceOnUse"><rect width="3" height="3" fill="#dbe8fb" /><path d="M0 0l3 3" stroke="#6c9be0" /></pattern>
        <pattern id="chk" width="4" height="4" patternUnits="userSpaceOnUse"><rect width="4" height="4" fill="#1c3f66" /><path d="M0 0h2v2H0zM2 2h2v2H2z" fill="#2693ff" /></pattern>
      </defs>
    </svg>

    <header class="head">
      <button class="app-btn" aria-label="应用程序菜单"><Icon n="appA" /><Icon n="appCaret" /></button>
      <div class="title-row">
        <div class="qat">
          <button v-for="q in qat" :key="q" :aria-label="q"><Icon :n="q" /></button>
          <Icon n="caret" />
          <button aria-label="redo"><Icon n="redo" /></button>
          <Icon n="caret" class="dim" />
          <Icon n="qatMore" />
        </div>
        <h1 class="title"><span>Autodesk AutoCAD 2018</span><span>Drawing6.dwg</span></h1>
        <div class="info">
          <button class="info-fold" aria-label="折叠"><Icon n="caretRight" /></button>
          <input class="search" type="text" placeholder="键入关键字或短语" aria-label="搜索" />
          <button aria-label="搜索"><Icon n="binoc" /></button>
          <button class="login"><Icon n="user" />登录</button>
          <Icon n="caret" />
          <button class="cart" aria-label="应用商店"><Icon n="cart" /></button>
          <button aria-label="A360"><Icon n="a360" /></button>
          <Icon n="caret" />
          <span class="info-sep"></span>
          <button class="help" aria-label="帮助"><Icon n="help" /></button>
          <Icon n="caret" />
        </div>
        <div class="win">
          <button aria-label="最小化"><Icon n="wMin" /></button>
          <button aria-label="还原"><Icon n="wMax" /></button>
          <button aria-label="关闭"><Icon n="wClose" /></button>
        </div>
      </div>
      <nav class="menu-row">
        <a v-for="m in menus" :key="m" href="#">{{ m }}</a>
        <div class="child-win">
          <button aria-label="最小化图形"><Icon n="mMin" /></button>
          <button aria-label="还原图形"><Icon n="mMax" /></button>
          <button aria-label="关闭图形"><Icon n="mClose" /></button>
        </div>
      </nav>
    </header>

    <nav class="tabs">
      <button v-for="(t, i) in tabs" :key="t" :class="{ active: i === 0 }">{{ t }}</button>
      <button class="fold" aria-label="最小化功能区"><Icon n="ribbonMin" /><Icon n="caret" /></button>
    </nav>

    <div class="ribbon">
      <section v-for="p in panels" :key="p.id" class="panel" :class="'p-' + p.id">
        <div class="body">
          <button v-for="b in p.big" :key="b.n" class="big">
            <span v-if="b.n === 'text'" class="big-a">A</span>
            <Icon v-else :n="b.n" />
            <span v-for="t in b.t" :key="t" class="cap">{{ t }}</span>
            <Icon v-if="b.caret" n="caret" class="drop" />
          </button>
          <div v-for="(c, ci) in p.cols" :key="ci" class="col">
            <button v-for="s in c" :key="s.n" class="small" :class="{ on: s.on }" :aria-label="s.t ?? s.n">
              <Icon :n="s.n" /><span v-if="s.t">{{ s.t }}</span><Icon v-if="s.caret" n="caret" class="more" />
            </button>
          </div>
          <div v-if="p.id === 'layers'" class="col grow">
            <label class="combo">
              <Icon n="bulb" /><Icon n="sun" /><Icon n="lockOpen" class="lock" /><i class="swatch layer"></i>
              <select aria-label="图层"><option>0</option></select><Icon n="caretBig" />
            </label>
            <div v-for="(r, ri) in layerRows" :key="ri" class="layer-row">
              <button v-for="s in r" :key="s.n" class="small" :aria-label="s.t ?? s.n"><Icon :n="s.n" /><span v-if="s.t">{{ s.t }}</span></button>
            </div>
          </div>
          <div v-if="p.id === 'props'" class="col grow">
            <div v-for="r in propRows" :key="r.icon" class="prop-row">
              <Icon :n="r.icon" />
              <label class="combo">
                <i :class="r.kind"></i>
                <select :aria-label="r.label"><option>ByLayer</option></select><Icon n="caretBig" />
              </label>
            </div>
          </div>
        </div>
        <h2 class="panel-title">{{ p.title }}<Icon v-if="p.caret" n="caretBig" /><Icon v-if="p.launch" n="launch" class="launch" /></h2>
      </section>
    </div>

    <nav class="files">
      <button class="file">
        <svg class="shape" viewBox="0 0 134 22" preserveAspectRatio="none" aria-hidden="true"><path d="M0 22C12 20 8 0 20 0H122C134 2 130 14 134 22Z" fill="url(#gd)" stroke="#5a5a5a" /></svg>
        <span>开始</span>
      </button>
      <button class="file current">
        <svg class="shape" viewBox="0 0 134 22" preserveAspectRatio="none" aria-hidden="true"><path d="M0 22C10 20 6 0 16 0H114C127 0 123 20 134 22Z" fill="url(#gt)" /></svg>
        <span>Drawing6*</span><span class="x">✕</span>
      </button>
      <button class="file add" aria-label="新图形">
        <svg class="shape" viewBox="0 0 24 14" preserveAspectRatio="none" aria-hidden="true"><path d="M0 0h15c6 1 6 8 9 14H8C3 13 4 4 0 0z" fill="#5a5a5a" /></svg>
        <span>✚</span>
      </button>
    </nav>

    <main class="work">
      <aside class="dock">
        <div class="bar">
          <Icon n="gripH" class="bar-grip" />
          <button v-for="t in drawTools" :key="t" :aria-label="t"><span v-if="t === 'text'" class="tool-a">A</span><Icon v-else :n="t" /></button>
        </div>
        <div class="bar">
          <Icon n="gripH" class="bar-grip" />
          <template v-for="(t, i) in dimTools" :key="i">
            <hr v-if="t === '|'" />
            <button v-else :aria-label="t"><Icon :n="t" /></button>
          </template>
        </div>
      </aside>

      <div class="canvas">
        <span class="view-label">[−][俯视][二维线框]</span>
        <svg class="drawing" width="600" height="280" viewBox="0 0 600 280">
          <g stroke="#fff" fill="none" shape-rendering="crispEdges">
            <path d="M29.500 84v79M349.500 84v79M29 164.500h321M30 86.500h319" />
            <path d="M391 210.500h46M442 210.500h46M439.500 162v45M439.500 214v45M437.500 207.500h4v6h-4z" />
          </g>
          <path d="M30 86.500L62 81v11zM349 86.500L317 81v11z" fill="#fff" />
          <text x="91" y="73" class="dim-text">200,00</text>
        </svg>
        <svg class="ucs" width="84" height="88" viewBox="0 0 84 88">
          <path d="M.5 70.500h9v9h-9zM5.500 75V25M5 75.500h50" stroke="#fff" fill="none" shape-rendering="crispEdges" />
          <text x="7" y="21">Y</text><text x="60" y="74">X</text>
        </svg>

        <div class="cube">
          <i class="ring"></i>
          <span class="n">北</span><span class="w">西</span><button class="top">上</button><span class="e">东</span><span class="s">南</span>
        </div>
        <button class="wcs">WCS <svg width="9" height="5" viewBox="0 0 9 5" aria-hidden="true"><path d="M.5 .5h8l-4 4z" fill="none" stroke="#b9bccb" /></svg></button>
        <svg class="navbar" width="32" height="212" viewBox="0 0 32 212" fill="none" stroke="#41464d" stroke-width="1.500" role="img" aria-label="导航栏">
          <circle cx="26" cy="5" r="3.500" fill="#474c52" stroke="none" /><path d="M24.500 3.500l3 3m0-3l-3 3" stroke="#6b7075" stroke-width="1" />
          <path d="M16 20h11v11a11 11 0 1 1-11-11z" fill="#555a62" /><circle cx="16" cy="30" r="6" fill="#5d6266" /><path d="M8 37l4-3M24 37l-4-3" />
          <path d="M13 49h6l-3 3zM13 119h6l-3 3zM13 157h6l-3 3z" fill="#41464d" stroke="none" />
          <path d="M3 56.500h26M3 164.500h26" stroke="#6a6f73" stroke-width="1" />
          <path d="M5 74c1-2 3-1 5 2V66c0-2 3-2 3 0V63c0-2 3-2 3 0v3c0-3 4-3 4 0l-1 5 3-5c1-2 4-1 3 1l-4 12c-1 4-3 5-6 5h-3c-4 0-7-6-9-10z" fill="#555a62" />
          <path d="M5 91l13 13M18 91L5 104M4 95v-5h5M14 90h5v5M4 100v5h5" /><circle cx="20" cy="104" r="5" /><path d="M24 108l4 4" stroke-width="3" />
          <path d="M14 148v-15h-2l4-5 4 5h-2v15zM12 143C0 142 2 136 13 136M19 136c14 2 10 7 0 7H9l3-3M9 143l3 3" />
          <path d="M5 170h5v5H5zM13 170h5v5h-5zM21 170h5v5h-5zM5 179h15v12H5z" /><path d="M10 181l7 4-7 4z" fill="#41464d" stroke="none" />
          <circle cx="26" cy="206" r="3.500" fill="#474c52" stroke="none" /><path d="M24 205.500h4M25 207.500h2" stroke="#6b7075" stroke-width="1" />
        </svg>

        <div class="cmd">
          <div class="log">
            <p v-for="(b, bi) in history" :key="bi" :class="'log' + bi">
              <span v-for="(l, li) in b" :key="li" class="log-line"><span v-for="(s, si) in l" :key="si" :class="{ lat: isLatin(s) }">{{ s }}</span></span>
            </p>
          </div>
          <div class="cmdline">
            <div class="cmd-tools"><Icon n="grip" /><button aria-label="关闭"><Icon n="cmdX" /></button><button aria-label="自定义"><Icon n="wrench" /></button></div>
            <div class="cmd-field">
              <Icon n="prompt" /><Icon n="caretDark" />
              <input type="text" placeholder="键入命令" aria-label="命令" />
              <Icon n="caretUp" />
            </div>
          </div>
        </div>

        <div class="ime">
          <Icon n="sogou" class="logo" />
          <span class="ime-a">A</span><Icon n="imePunc" /><Icon n="imeMic" /><Icon n="imeKey" /><Icon n="imeShirt" /><Icon n="imeGrid" />
        </div>
      </div>
    </main>

    <footer class="foot">
      <nav class="layouts">
        <button class="lay current">
          <svg class="shape" viewBox="0 0 46 18" preserveAspectRatio="none" aria-hidden="true"><path d="M0 0h46c-5 4-4 18-11 18H11C4 18 5 4 0 0z" fill="url(#gb)" /></svg><span>模型</span>
        </button>
        <button v-for="l in ['Layout1', 'Layout2']" :key="l" class="lay">
          <svg class="shape" viewBox="0 0 68 18" preserveAspectRatio="none" aria-hidden="true"><path d="M0 0h68c-5 4-4 17-11 17H11C4 17 5 4 0 0z" fill="#555" stroke="#666" /></svg><span>{{ l }}</span>
        </button>
        <button class="lay plus" aria-label="新建布局">
          <svg class="shape" viewBox="0 0 24 18" preserveAspectRatio="none" aria-hidden="true"><path d="M5 1h18c0 8-2 15-6 15H1C2 10 1 4 5 1z" fill="#505050" stroke="#646464" /></svg><span>✚</span>
        </button>
      </nav>
      <div class="status">
        <div class="sg"><span class="coords">782.27, 140.83, 0.00</span></div>
        <div class="sg"><button class="model">模型</button></div>
        <div v-for="(g, gi) in status" :key="gi" class="sg">
          <div v-for="(c, ci) in g" :key="ci" class="cell">
            <template v-for="(s, si) in c" :key="si">
              <span v-if="s[0] === '&quot;'" class="s-text" :class="{ units: s[1] === '小' }">{{ s.slice(1) }}</span>
              <button v-else-if="s === 'v'" class="s-drop" aria-label="更多"><Icon n="caret" /></button>
              <button v-else class="s-btn" :aria-label="s"><Icon :n="s" /></button>
            </template>
          </div>
        </div>
      </div>
      <span class="mark">CSDN @白日 梦想家</span>
    </footer>
  </div>
</template>

<style>
body { margin: 0; background: #383838; }
</style>

<style scoped>
.app { display: flex; flex-direction: column; height: 100vh; overflow: hidden; color: #f0f0f0; background: #383838; font: 12px/16px "Open Sans", "Noto Sans CJK SC", sans-serif; }
.app * { box-sizing: border-box; }
.defs { position: absolute; }
svg { flex: none; display: block; }
button, select, input { font: inherit; color: inherit; background: none; border: 0; padding: 0; margin: 0; outline: 0; }
button { display: flex; align-items: center; white-space: nowrap; }
a { color: inherit; text-decoration: none; }
h1, h2, p { margin: 0; font: inherit; }

.head { display: grid; grid-template: 24px 21px / 41px 1fr; background: #5a5a5a; }
.app-btn { grid-row: 1 / 3; height: 41px; border: 1px solid #111; justify-content: center; gap: 3px; padding: 0 2px 8px 4px; background: linear-gradient(#a9a9a9, #707070); }
.title-row { display: flex; background: #fff; min-width: 0; }
.qat { display: flex; align-items: center; gap: 7px; width: 214px; padding-left: 7px; background: linear-gradient(#a8a8a8, #868686); border-right: 1px solid #777; border-top: 1px solid #888; }
.qat .dim { opacity: .6; }
.title { flex: 1; display: flex; justify-content: center; align-items: center; gap: 16px; color: #1a1a1a; white-space: nowrap; font-family: "Noto Sans", sans-serif; }
.info { display: flex; align-items: center; width: 447px; background: linear-gradient(#a8a8a8, #868686); border-right: 1px solid #777; border-top: 1px solid #666; }
.info-fold { width: 14px; justify-content: center; }
.search { width: 182px; height: 22px; margin-right: 4px; padding: 0 4px; background: #767676; border: 1px solid #444; font-style: italic; }
.search::placeholder { color: #d0d0d0; opacity: 1; }
.login { gap: 5px; margin: 0 60px 0 8px; }
.cart { margin: 0 8px 0 13px; }
.info > svg { margin-left: 5px; }
.login + svg { margin-left: 0; }
.info-sep { width: 1px; height: 22px; margin: 0 8px; background: #aaa; }
.win { display: flex; margin: 0 2px 0 24px; }
.win button { width: 46px; justify-content: center; }
.menu-row { display: flex; align-items: center; gap: 25px; padding: 0 5px 0 14px; background: linear-gradient(#a6a6a6, #636363); border-top: 1px solid #333; border-bottom: 1px solid #2c2c2c; white-space: nowrap; font-family: "Noto Sans", "Noto Sans CJK SC", sans-serif; }
.child-win { display: flex; gap: 5px; margin-left: auto; }

.tabs { display: flex; align-items: flex-end; height: 21px; padding-left: 4px; background: #535353; border-bottom: 1px solid #2a2a2a; color: #d2d2d2; flex: none; }
.tabs button { height: 18px; padding: 2px 10px 0; }
.tabs .active { padding: 1px 7px 0; margin-right: 2px; color: #fff; background: linear-gradient(#7a7a7a, #5c5c5c); border: 1px solid #333; border-bottom: 0; }
.tabs .fold { margin-left: 12px; gap: 5px; }

.ribbon { display: flex; flex: none; height: 99px; padding-left: 1px; background: linear-gradient(#545454, #3d3d3d); border-bottom: 1px solid #8a8a8a; }
.panel { display: flex; flex-direction: column; flex: none; background: #5b5b5b; border-right: 1px solid #3c3c3c; border-bottom: 1px solid #333; box-shadow: inset -1px 0 #6a6a6a; }
.body { display: flex; flex: 1; padding-top: 5px; }
.panel-title { display: flex; position: relative; align-items: center; justify-content: center; gap: 7px; height: 18px; margin: 0 1px; padding-top: 2px; background: linear-gradient(#525252, #464646); }
.launch { position: absolute; right: 4px; bottom: 5px; }
.p-draw { width: 211px; } .p-draw .col { margin-left: 3px; }
.p-modify { width: 227px; } .p-modify .body { padding-left: 3px; }
.p-annotate { width: 156px; } .p-annotate .body { padding-left: 4px; }
.p-layers { width: 252px; }
.p-block { width: 134px; }
.p-props { width: 244px; }
.p-group { width: 68px; }
.p-util { width: 76px; } .p-util .body, .p-clip .body { padding-left: 4px; gap: 4px; }
.p-clip { width: 76px; }
.p-view { width: 61px; } .p-view .body { padding-left: 9px; } .p-view .panel-title { padding-right: 12px; }
.big { flex-direction: column; width: 41px; flex: none; }
.big > svg:first-child { height: 32px; margin: 1px 0 4px; }
.big-a { height: 32px; margin: 1px 0 4px; font: 36px/34px "Open Sans", sans-serif; color: #e8e8e8; }
.cap { height: 17px; line-height: 17px; }
.drop { margin-top: 3px; }
.col { display: flex; flex-direction: column; }
.grow { flex: 1; }
.small { height: 24px; padding: 0 10px 0 4px; gap: 5px; }
.more { margin-left: 3px; }
.small > svg:first-child + .more { margin-left: 0; }
.p-modify .more { margin-left: 6px; }
.p-modify .col:nth-child(3) .small { padding-right: 7px; }
.small.on { width: 24px; padding: 0 0 0 3px; height: 22px; background: linear-gradient(#83a3dc, #5a78ab); border: 1px solid #2d4470; }
.layer-row { display: flex; }
.layer-row .small { padding: 0 4px; }
.combo { display: flex; align-items: center; height: 22px; margin: 0 0 2px; padding-right: 1px; border: 1px solid #333; background: linear-gradient(#565656, #707070); }
.p-layers .combo { margin-right: 2px; padding-left: 5px; gap: 6px; }
.combo select { flex: 1; min-width: 0; appearance: none; }
.combo option { color: #222; }
.combo .lock { margin-left: -3px; }
.swatch { width: 16px; height: 16px; margin: 0 10px 0 12px; background: #fff; border: 1px solid #ccc; flex: none; }
.swatch.layer { width: 14px; height: 14px; margin: 0 0 0 -2px; border-color: #000; }
.rule { width: 60px; height: 1px; margin: 0 2px 0 7px; background: #fff; }
.prop-row { display: flex; align-items: center; gap: 2px; height: 24px; padding: 0 2px; }
.prop-row .combo { flex: 1; margin: 0; }

.files { display: flex; flex: none; align-items: flex-end; height: 29px; padding: 0 0 4px 14px; background: linear-gradient(#383838 25px, #5f5f5f 25px); }
.file { position: relative; width: 134px; height: 22px; padding: 1px 0 0 18px; color: #aaa; }
.file + .file { margin-left: -6px; }
.file .shape { position: absolute; inset: 0; width: 100%; height: 100%; }
.file span { position: relative; }
.file.current { padding-left: 13px; color: #fff; }
.file .x { margin-left: auto; margin-right: 20px; color: #3a3a3a; font-size: 11px; }
.file + .file.add { width: 24px; height: 14px; margin: 0 0 3px -2px; padding: 0; justify-content: center; color: #ccc; font-size: 10px; }

.work { display: flex; flex: 1; min-height: 0; }
.dock { display: flex; align-items: flex-start; gap: 3px; width: 57px; background: #5c5c5c; flex: none; }
.bar { display: flex; flex-direction: column; align-items: center; width: 25px; padding: 0 2px 0 0; border: 1px solid #373737; background: #606060; }
.bar-grip { margin: 2px 0 1px; }
.bar button { height: 22px; }
.bar hr { width: 19px; height: 2px; margin: 2px 0; border: 0; background: #f0f0f0; }
.tool-a { font: 600 18px/18px "Open Sans", sans-serif; }
.canvas { position: relative; flex: 1; min-width: 0; background: #222931; overflow: hidden; }
.view-label { position: absolute; left: 3px; top: 6px; }
.drawing { position: absolute; left: 580px; top: 206px; overflow: visible; }
.dim-text { font: 72px "Liberation Serif", serif; fill: #0f0; }
.ucs { position: absolute; left: 16px; bottom: 8px; overflow: visible; }
.ucs text { font: 300 18px "Open Sans", sans-serif; fill: #fff; }
.cube { position: absolute; right: 17px; top: 16px; display: grid; grid-template: 20px 92px 20px / 20px 92px 20px; place-items: center; font: 18px/20px "Noto Sans CJK SC", sans-serif; color: #c3c3c3; }
.cube > * { position: relative; }
.cube .n, .cube .s { grid-column: 2; }
.cube .n { grid-row: 1; } .cube .s { grid-row: 3; }
.cube .w { grid-area: 2 / 1; } .cube .e { grid-area: 2 / 3; } .cube .top { grid-area: 2 / 2; }
.cube .ring { grid-area: 1 / 1 / 4 / 4; width: 120px; height: 120px; border: 13px solid #42494f; border-radius: 50%; }
.cube .top { width: 52px; height: 52px; justify-content: center; background: linear-gradient(#9aa3a9, #9aa3a9) center / 32px 32px no-repeat #b2b4b5; border: 1px solid #777; color: #4c535f; font-size: 28px; }
.wcs { position: absolute; right: 59px; top: 169px; width: 48px; height: 18px; gap: 5px; justify-content: center; border-radius: 4px; border: 1px solid #7c7e8c; background: #9a9cab; color: #3e4150; font-size: 11px; }
.navbar { position: absolute; right: 4px; top: 212px; border-radius: 4px; background: #5d6266; box-shadow: 0 0 0 2px #1a2027; }

.cmd { position: absolute; left: 792px; bottom: 1px; width: 278px; }
.log { width: 212px; margin: 0 0 3px 60px; }
.log p { padding: 0 2px; border-radius: 2px; background: linear-gradient(#4c4f51, #5a5b5c); font: 13px/15px "Noto Sans CJK SC", sans-serif; color: #fff; }
.log p + p { margin-top: 5px; }
.log .log0 { color: #a2a4a6; } .log .log1 { color: #cfcfcf; background: linear-gradient(#515355, #5e5f60); } .log .log2 { background: linear-gradient(#575859, #686868); }
.log-line { display: block; height: 15px; white-space: pre; }
.lat { font: 12px/15px "DejaVu Sans Mono", monospace; }
.cmdline { display: flex; height: 26px; border: 1px solid #6a6a6a; border-radius: 2px; }
.cmd-tools { display: flex; align-items: center; gap: 6px; width: 53px; padding-left: 3px; background: linear-gradient(#6e6e6e, #3c3c3c); }
.cmd-tools button + button { margin-left: 2px; }
.cmd-field { display: flex; flex: 1; align-items: center; gap: 3px; padding: 0 3px 0 5px; background: #bdbec0; }
.cmd-field input { flex: 1; min-width: 0; margin-left: 4px; font: italic 13px/18px "Noto Sans CJK SC", sans-serif; color: #222; }
.cmd-field input::placeholder { color: #777; opacity: 1; }

.ime { position: absolute; right: 5px; bottom: 82px; display: flex; align-items: center; gap: 8px; width: 158px; height: 26px; padding: 0 5px 0 18px; background: #fff; border: 1px solid #9fc6ea; border-radius: 2px; }
.ime .logo { position: absolute; left: -22px; bottom: -1px; }
.ime-a { font: 20px/20px "Open Sans", sans-serif; color: #0a6ed6; }

.foot { position: relative; display: flex; flex: none; justify-content: space-between; height: 29px; background: #383838; border-top: 1px solid #5a5a5a; }
.layouts { display: flex; padding-left: 12px; color: #aeaeae; }
.lay { position: relative; width: 68px; height: 18px; justify-content: center; }
.lay .shape { position: absolute; inset: 0; width: 100%; height: 100%; }
.lay span { position: relative; }
.lay.current { width: 46px; color: #fff; font-weight: 700; }
.lay.plus { width: 24px; margin-left: 3px; font-size: 10px; color: #ccc; }
.status { display: flex; gap: 1px; height: 27px; padding-right: 1px; }
.sg { display: flex; border: 1px solid #7d7d7d; background: #505050; }
.cell { display: flex; align-items: center; }
.cell + .cell { border-left: 1px solid #7d7d7d; }
.coords { width: 140px; padding-right: 4px; line-height: 24px; text-align: right; white-space: nowrap; font-family: Roboto, sans-serif; }
.model { padding: 0 2px; font-weight: 500; }
.s-btn { width: 24px; height: 25px; justify-content: center; }
.s-drop { width: 15px; height: 25px; justify-content: center; }
.s-text { padding-left: 5px; white-space: nowrap; font-family: Roboto, "Noto Sans CJK SC", sans-serif; }
.s-text.units { width: 68px; padding-left: 7px; }
.mark { position: absolute; right: 16px; bottom: 6px; font: 20px/28px "Noto Sans CJK SC", sans-serif; color: rgba(225, 225, 225, .8); white-space: nowrap; }
</style>
